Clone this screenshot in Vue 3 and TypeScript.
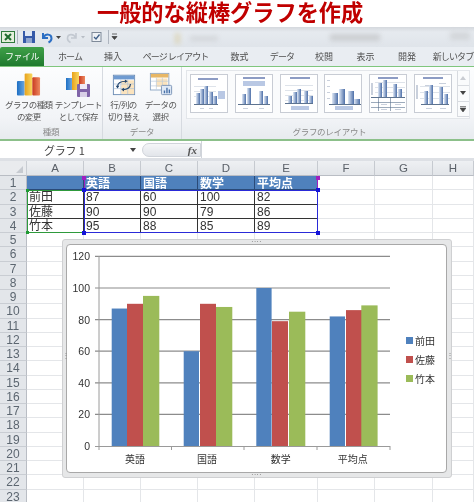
<script setup lang="ts">
type Box = [number, number, number, number, string]

const rowNumbers = Array.from({ length: 23 }, (_, i) => i + 1)
const columns = ['A', 'B', 'C', 'D', 'E', 'F', 'G', 'H']
const table = [
  ['', '英語', '国語', '数学', '平均点'],
  ['前田', '87', '60', '100', '82'],
  ['佐藤', '90', '90', '79', '86'],
  ['竹本', '95', '88', '85', '89'],
]
const sheetCells = rowNumbers.flatMap((r) =>
  columns.map((c, i) => ({
    key: `${c}${r}`,
    text: table[r - 1]?.[i] ?? '',
    head: r === 1 && i < 5,
    body: r > 1 && r <= 4 && i < 5,
    row: r,
  })),
)

const tabs = [
  { label: 'ホーム', w: 46, kana: true },
  { label: '挿入', w: 40, kana: false },
  { label: 'ページ レイアウト', w: 85, kana: true },
  { label: '数式', w: 43, kana: false },
  { label: 'データ', w: 42, kana: true },
  { label: '校閲', w: 42, kana: false },
  { label: '表示', w: 41, kana: false },
  { label: '開発', w: 42, kana: false },
  { label: '新しいタブ', w: 50, kana: true },
]

const C = { t: '#8d9cc4', b: '#b9c8e4', d: '#5c7cb0', l: '#c9d0dc', a: '#5d7390' }
const bar = (x: number, h: number, w = 4): Box => [x, 30 - h, w, h, 'url(#thumbBar)']
const thumbs: Box[][] = [
  [[8, 4, 20, 2, C.t], [4, 12, 22, .6, C.l], [4, 17, 22, .6, C.l], [4, 22, 22, .6, C.l], bar(6, 11), bar(10, 15), bar(14, 18), bar(19, 12), bar(23, 8), [4, 30, 24, 1, C.a], [28, 17, 7, 8, C.b], [10, 34, 4, 1, C.l], [19, 34, 4, 1, C.l]],
  [[8, 3, 22, 2, C.t], [8, 7, 22, 5, C.b], bar(7, 10), bar(12, 16), bar(24, 13), bar(29, 8), [3, 30, 32, 1, C.a], [8, 34, 5, 1, C.l], [24, 34, 5, 1, C.l]],
  [[10, 3, 20, 2, C.t], [5, 11, 28, .6, C.l], [5, 16, 28, .6, C.l], [5, 21, 28, .6, C.l], [5, 26, 28, .6, C.l], bar(8, 8), bar(13, 12), bar(17, 15), bar(24, 13), bar(29, 8), [5, 29, 28, 1, C.a], [11, 32, 18, 4, C.b]],
  [[3, 6, 3, 1, C.l], [3, 12, 3, 1, C.l], [3, 18, 3, 1, C.l], [3, 24, 3, 1, C.l], bar(8, 11, 6), bar(15, 15, 6), bar(24, 13, 6), bar(30, 5, 6), [5, 30, 32, 1, C.a], [11, 32, 18, 4, C.b]],
  [[9, 3, 20, 2, C.t], [2, 9, 2, 12, C.l], [6, 8, 30, .6, C.l], [6, 13, 30, .6, C.l], [6, 18, 30, .6, C.l], [9, 9, 4, 14, 'url(#thumbBar)'], [14, 6, 4, 17, 'url(#thumbBar)'], [24, 10, 4, 13, 'url(#thumbBar)'], [29, 15, 4, 8, 'url(#thumbBar)'], [2, 23, 34, 1, C.a], [2, 28, 34, .6, C.a], [2, 33, 34, .6, C.a], [9, 23, .6, 14, C.a], [21, 23, .6, 14, C.a], [12, 30, 6, 1, C.l], [26, 30, 6, 1, C.l], [12, 35, 6, 1, C.l], [26, 35, 6, 1, C.l]],
  [[9, 3, 20, 2, C.t], [2, 11, 2, 14, C.l], [6, 12, 30, .6, C.l], [6, 18, 30, .6, C.l], [6, 24, 30, .6, C.l], [25, 9, 7, 1, C.l], [11, 11, 6, 1, C.l], bar(10, 13), bar(15, 19), bar(25, 17), bar(30, 10), [7, 30, 28, 1, C.a], [12, 34, 6, 1, C.l], [26, 34, 6, 1, C.l]],
]

const seriesColors = ['#4f81bd', '#c0504d', '#9bbb59']
const legendNames = ['前田', '佐藤', '竹本']
const axisValues = [0, 20, 40, 60, 80, 100, 120]
const axisY = (v: number) => 201 - v * 1.58
const barX = [
  [44.7, 60, 76],
  [116.7, 133, 149],
  [189.3, 205, 222],
  [262.7, 279, 294.3],
]
const barW = [15.3, 16, 16.3]
const categories = [
  { name: '英語', cx: 68, values: [87, 90, 95] },
  { name: '国語', cx: 140, values: [60, 90, 88] },
  { name: '数学', cx: 213.7, values: [100, 79, 85] },
  { name: '平均点', cx: 285.7, values: [82, 86, 89] },
]
</script>

<template>
  <div class="page">
    <h1 class="title">一般的な縦棒グラフを作成</h1>

    <div class="titlebar">
      <svg class="qat" width="118" height="20" viewBox="0 0 118 20">
        <rect x="1.5" y="4.5" width="13" height="11" fill="#e4efdc" stroke="#2f7a3c" />
        <path d="M5 7l6 6M11 7l-6 6" stroke="#1e6b2d" stroke-width="2" />
        <path d="M17.5 3v14" stroke="#aeb5bf" />
        <rect x="23" y="4" width="12" height="12" fill="#3559a8" />
        <rect x="25" y="4" width="7" height="5" fill="#dfe7f4" />
        <rect x="26" y="11" width="6" height="5" fill="#8fa5cf" />
        <path d="M43 6v5h5M43.5 10.5c2-4 8-4 8 1 0 2-1 3-3 4" fill="none" stroke="#2c6fc4" stroke-width="2" />
        <path d="M56 9h5l-2.5 3z" fill="#444" />
        <path d="M76 6v5h-5M75.5 10.5c-2-4-8-4-8 1 0 2 1 3 3 4" fill="none" stroke="#c3c9d1" stroke-width="1.6" />
        <path d="M81 9h4l-2 2.5z" fill="#b8bdc5" />
        <rect x="92" y="5.5" width="9" height="9" fill="#eef1f5" stroke="#7f8a99" />
        <path d="M94 10l2 2 3.5-4.5" fill="none" stroke="#3f5f88" stroke-width="1.3" />
        <path d="M108.5 3v14" stroke="#aeb5bf" />
        <path d="M112 7h5M112 9.5h5l-2.5 3z" stroke="#444" fill="#444" stroke-width=".8" />
      </svg>
      <span class="smudge smudge-a"></span>
      <span class="smudge smudge-b"></span>
      <span class="smudge smudge-c"></span>
      <span class="smudge smudge-d"></span>
    </div>

    <nav class="tabs">
      <span class="tab-file">ファイル</span>
      <span
        v-for="t in tabs"
        :key="t.label"
        class="tab"
        :class="{ kana: t.kana }"
        :style="{ width: t.w + 'px' }"
      >{{ t.label }}</span>
    </nav>

    <section class="ribbon">
      <div class="group group-type">
        <div class="tools">
          <div class="tool tool-wide">
            <svg width="25" height="26" viewBox="0 0 26 26">
              <defs>
                <linearGradient id="cb" x1="0" x2="1" y1="0" y2="0"><stop offset="0" stop-color="#1d6fc4" /><stop offset="1" stop-color="#6aa6e0" /></linearGradient>
                <linearGradient id="cy" x1="0" x2="1" y1="0" y2="0"><stop offset="0" stop-color="#e8a21c" /><stop offset="1" stop-color="#f8d860" /></linearGradient>
                <linearGradient id="cr" x1="0" x2="1" y1="0" y2="0"><stop offset="0" stop-color="#c93a20" /><stop offset="1" stop-color="#ee8a60" /></linearGradient>
              </defs>
              <rect x="1" y="10" width="8" height="15" rx="1" fill="url(#cb)" />
              <rect x="9" y="2" width="8" height="23" rx="1" fill="url(#cy)" />
              <rect x="17" y="6" width="8" height="19" rx="1" fill="url(#cr)" />
            </svg>
            <span>グラフの種類<br />の変更</span>
          </div>
          <div class="tool tool-wide">
            <svg width="26" height="26" viewBox="0 0 26 26">
              <rect x="1" y="7" width="6" height="12" fill="url(#cb)" />
              <rect x="7" y="1" width="7" height="18" fill="url(#cy)" />
              <rect x="14" y="5" width="6" height="11" fill="url(#cr)" />
              <rect x="12" y="13" width="13" height="13" rx="1" fill="#8064a8" />
              <rect x="15" y="13" width="7" height="5" fill="#efeaf5" />
              <rect x="15" y="21" width="7" height="5" fill="#d8cfe6" />
            </svg>
            <span>テンプレート<br />として保存</span>
          </div>
        </div>
        <div class="group-label">種類</div>
      </div>

      <div class="group group-data">
        <div class="tools">
          <div class="tool tool-narrow">
            <svg width="24" height="26" viewBox="0 0 26 26">
              <rect x="1.5" y="3.5" width="23" height="21" fill="#fff" stroke="#6d8db5" />
              <rect x="2" y="4" width="22" height="4" fill="#6f9bd1" />
              <rect x="10" y="9" width="14" height="15" fill="#fbe3bd" />
              <path d="M2 13h22M2 18h22M9.5 8v16M17 8v16" stroke="#a9bfd8" stroke-width=".7" />
              <path d="M6 16c0-4 4-6 9-6" fill="none" stroke="#23466f" stroke-width="1.3" />
              <path d="M14 8l3 2-3 2zM4 15l2 3 2-3z" fill="#23466f" />
              <path d="M20 13c0 4-4 6-8 6" fill="none" stroke="#23466f" stroke-width="1.3" />
              <path d="M13 17l-3 2 3 2z" fill="#23466f" />
            </svg>
            <span>行/列の<br />切り替え</span>
          </div>
          <div class="tool tool-narrow">
            <svg width="24" height="26" viewBox="0 0 26 26">
              <rect x="1.5" y="1.5" width="20" height="18" fill="#fff" stroke="#8da6c4" />
              <rect x="2" y="2" width="19" height="4" fill="#e8b765" />
              <rect x="8" y="7" width="12" height="9" fill="#fbe3bd" />
              <path d="M2 10h19M2 15h19M8 6v13M14.5 6v13" stroke="#b9c8da" stroke-width=".7" />
              <rect x="13.5" y="14.5" width="11" height="10" rx="1" fill="#dfe9f6" stroke="#7993b5" />
              <path d="M16 23v-3h1.5v3zM18.7 23v-6h1.5v6zM21.3 23v-4h1.5v4z" fill="#4670a8" />
            </svg>
            <span>データの<br />選択</span>
          </div>
        </div>
        <div class="group-label">データ</div>
      </div>

      <div class="group group-layout">
        <div class="gallery">
          <svg
            v-for="(thumb, i) in thumbs"
            :key="i"
            class="thumb"
            width="38"
            height="39"
            viewBox="0 0 38 39"
          >
            <defs v-if="i === 0">
              <linearGradient id="thumbBar" x1="0" x2="1" y1="0" y2="0">
                <stop offset="0" stop-color="#dfe8f5" />
                <stop offset="1" stop-color="#4d6fa8" />
              </linearGradient>
            </defs>
            <rect
              v-for="(b, j) in thumb"
              :key="j"
              :x="b[0]"
              :y="b[1]"
              :width="b[2]"
              :height="b[3]"
              :fill="b[4]"
            />
          </svg>
          <div class="scroller">
            <span class="scroll-btn"><svg width="6" height="4" viewBox="0 0 6 4"><path d="M3 0l3 4H0z" fill="#c9ccd2" /></svg></span>
            <span class="scroll-btn"><svg width="6" height="4" viewBox="0 0 6 4"><path d="M0 0h6L3 4z" fill="#444" /></svg></span>
            <span class="scroll-btn"><svg width="6" height="6" viewBox="0 0 6 6"><path d="M0 .5h6M0 2h6L3 6z" stroke="#444" stroke-width=".6" fill="#444" /></svg></span>
          </div>
        </div>
        <div class="group-label">グラフのレイアウト</div>
      </div>
    </section>

    <div class="formula">
      <span class="namebox">グラフ 1</span>
      <svg class="name-arrow" width="6" height="4" viewBox="0 0 6 4"><path d="M0 0h6L3 4z" fill="#444" /></svg>
      <span class="fx-pill"><i class="fx">fx</i></span>
      <span class="formula-input"></span>
    </div>

    <div class="sheet">
      <div class="grid">
        <div class="corner"><svg width="7" height="7" viewBox="0 0 7 7"><path d="M7 0v7H0z" fill="#c6cad0" /></svg></div>
        <div v-for="c in columns" :key="c" class="col-head">{{ c }}</div>
        <template v-for="r in rowNumbers" :key="r">
          <div class="row-head">{{ r }}</div>
          <div
            v-for="cell in sheetCells.filter((s) => s.row === r)"
            :key="cell.key"
            class="cell"
            :class="{ 'cell-head': cell.head, 'cell-body': cell.body }"
          >{{ cell.text }}</div>
        </template>
      </div>

      <div class="sel sel-green"></div>
      <div class="sel sel-purple"></div>
      <div class="sel sel-blue"></div>
      <i class="handle h-b1"></i><i class="handle h-e1"></i>
      <i class="handle h-b2"></i><i class="handle h-e2"></i>
      <i class="handle h-b4"></i><i class="handle h-e4"></i>
      <i class="handle g h-a2"></i><i class="handle g h-a4"></i>

      <div class="chart">
        <div class="chart-inner">
          <svg class="chart-svg" width="379" height="228" viewBox="0 0 379 228">
            <g v-for="v in axisValues" :key="v">
              <line x1="28" :x2="v === 0 ? 28 : 323" :y1="axisY(v)" :y2="axisY(v)" stroke="#8c8c8c" stroke-width="1.2" />
              <text x="23" :y="axisY(v) + 4" text-anchor="end" class="tick">{{ v }}</text>
            </g>
            <g v-for="(cat, i) in categories" :key="cat.name">
              <rect
                v-for="(val, s) in cat.values"
                :key="s"
                :x="barX[i][s]"
                :y="axisY(val)"
                :width="barW[s]"
                :height="val * 1.58"
                :fill="seriesColors[s]"
              />
              <text :x="cat.cx" y="218" text-anchor="middle" class="cat">{{ cat.name }}</text>
            </g>
            <path d="M32 11v194M28 201.5h295M104.5 201v4M177 201v4M250 201v4M323 201v4" stroke="#9a9a9a" fill="none" />
            <g v-for="(n, i) in legendNames" :key="n">
              <rect x="339" :y="92 + i * 19" width="7" height="7" :fill="seriesColors[i]" />
              <text x="348" :y="99.5 + i * 19" class="legend">{{ n }}</text>
            </g>
          </svg>
        </div>
        <span class="dots dots-top">····</span>
        <span class="dots dots-bottom">····</span>
        <span class="vdots vdots-left">⋮</span>
        <span class="vdots vdots-right">⋮</span>
      </div>
    </div>
  </div>
</template>

<style>
html, body { margin: 0; background: #fff; }
</style>

<style scoped>
.page {
  width: 474px;
  height: 502px;
  overflow: hidden;
  background: #fff;
  color: #4a4a4a;
  font-family: "Noto Sans CJK JP", "Liberation Sans", sans-serif;
  filter: blur(.3px);
}
.title {
  margin: 0;
  height: 27px;
  padding-left: 97px;
  font-size: 22.2px;
  line-height: 23px;
  font-weight: 700;
  color: #c00000;
  white-space: nowrap;
}
.titlebar {
  position: relative;
  height: 20px;
  background: linear-gradient(#d4d8dd, #e6eaef 25%, #dfe4ea);
}
.qat { display: block; }
.smudge {
  position: absolute;
  background: #c2c4c6;
  filter: blur(2.5px);
  opacity: .7;
}
.smudge-a { left: 175px; top: 6px; width: 5px; height: 11px; background: #d9cfa8; }
.smudge-b { left: 190px; top: 9px; width: 28px; height: 5px; opacity: .5; }
.smudge-c { left: 330px; top: 7px; width: 50px; height: 7px; }
.smudge-d { left: 450px; top: 5px; width: 20px; height: 8px; opacity: .5; }
.tabs {
  display: flex;
  align-items: center;
  height: 19px;
  background: #e9edf2;
  border-bottom: 1px solid #7fc67d;
  font-size: 9px;
  white-space: nowrap;
  overflow: hidden;
}
.tab-file {
  flex: none;
  width: 44px;
  height: 19px;
  margin-right: 3px;
  line-height: 19px;
  text-align: center;
  color: #fff;
  letter-spacing: -.5px;
  background: linear-gradient(#3fa048, #1f7a2e);
  border-radius: 2px 2px 0 0;
}
.tab { flex: none; text-align: center; color: #4f4f4f; }
.tab.kana { letter-spacing: -.9px; }
.ribbon {
  display: flex;
  height: 72px;
  background: linear-gradient(#fcfdfe, #f2f4f7 70%, #e7ebef);
  border-bottom: 2px solid #8cc08a;
}
.group {
  display: flex;
  flex-direction: column;
  flex: none;
  border-right: 1px solid #d6dae0;
}
.group-type { width: 102px; }
.group-data { width: 78px; }
.group-layout { flex: 1; border-right: 0; }
.tools { display: flex; flex: 1; justify-content: center; padding-top: 4px; min-height: 0; }
.group-type .tools { gap: 2px; padding-left: 5px; }
.tool {
  display: flex;
  flex-direction: column;
  align-items: center;
  font-size: 8.5px;
  line-height: 12px;
  letter-spacing: -.6px;
  text-align: center;
  color: #555;
  white-space: nowrap;
}
.tool svg { margin-bottom: 1px; }
.tool-wide { width: 48px; }
.tool-narrow { width: 37px; }
.group-label {
  height: 15px;
  line-height: 14px;
  font-size: 8.5px;
  text-align: center;
  color: #8a8a8a;
  letter-spacing: -.3px;
}
.gallery {
  display: flex;
  align-items: flex-start;
  gap: 6.8px;
  height: 44px;
  margin: 3px 7px 0 4px;
  padding: 3px 0 0 3px;
  background: #fafbfc;
  border: 1px solid #e3e6ea;
  box-sizing: content-box;
}
.group-layout .group-label { margin-top: auto; }
.thumb {
  flex: none;
  background: #fff;
  outline: 1px solid #c8ccd4;
  outline-offset: -1px;
}
.scroller {
  display: flex;
  flex-direction: column;
  width: 11px;
  margin: -3px 0 0 -2px;
  border-left: 1px solid #d8dbe0;
}
.scroll-btn {
  display: flex;
  align-items: center;
  justify-content: center;
  height: 15.3px;
  border-bottom: 1px solid #d8dbe0;
  box-sizing: border-box;
}
.formula {
  display: flex;
  align-items: center;
  height: 17px;
  background: #fff;
  border-bottom: 3px solid #dde0e5;
  font-size: 11px;
  color: #444;
}
.namebox { padding-left: 44px; letter-spacing: -.2px; white-space: nowrap; flex: none; width: 86px; }
.name-arrow { margin-right: 6px; flex: none; }
.fx-pill {
  flex: none;
  width: 59px;
  height: 14px;
  text-align: right;
  background: linear-gradient(#f5f6f8, #e2e5ea);
  border: 1px solid #d0d4da;
  border-radius: 8px 0 0 8px;
  box-sizing: border-box;
}
.fx {
  padding-right: 3px;
  font-family: "Liberation Serif", serif;
  font-weight: 700;
  font-size: 11px;
  line-height: 12px;
  color: #555;
  display: block;
}
.formula-input { flex: 1; height: 17px; border-left: 1px solid #d0d4da; }
.sheet {
  position: relative;
  height: 342px;
  overflow: hidden;
}
.grid {
  display: grid;
  grid-template-columns: 27px 57px 57px 57px 57px 63px 57px 58px 41px;
  grid-template-rows: 15px repeat(23, 14.25px);
  font-family: "Liberation Sans", "Noto Sans CJK JP", sans-serif;
}
.corner {
  display: flex;
  align-items: flex-end;
  justify-content: flex-end;
  padding: 0 3px 2px 0;
  background: #e9ebee;
  border-right: 1px solid #c9cdd3;
  border-bottom: 1px solid #b9bdc4;
  box-sizing: border-box;
}
.col-head {
  text-align: center;
  font-size: 11.5px;
  line-height: 15px;
  color: #5a6068;
  background: linear-gradient(#eef0f3, #e2e5e9);
  border-right: 1px solid #c6cad0;
  border-bottom: 1px solid #b9bdc4;
  box-sizing: border-box;
}
.row-head {
  text-align: center;
  font-size: 12px;
  line-height: 14px;
  color: #5c6670;
  background: #e3e6ea;
  border-right: 1px solid #b9bdc4;
  border-bottom: 1px solid #c9cdd3;
  box-sizing: border-box;
}
.cell {
  padding-left: 1px;
  font-size: 12px;
  line-height: 14px;
  color: #333;
  border-right: 1px solid #e4e6e9;
  border-bottom: 1px solid #e4e6e9;
  box-sizing: border-box;
  white-space: nowrap;
}
.cell-head {
  padding-left: 2px;
  font-weight: 700;
  color: #fff;
  background: #4f81bd;
  border-right: 1px solid #2a4a78;
  border-bottom: 1px solid #2a4a78;
  font-family: "Noto Sans CJK JP", sans-serif;
}
.cell-body {
  padding-left: 2px;
  border-right: 1px solid #333;
  border-bottom: 1px solid #333;
}
.sel { position: absolute; pointer-events: none; }
.sel-green { left: 27px; top: 29px; width: 57px; height: 43px; border: 1px solid #2e9a3c; border-right: 0; box-sizing: border-box; }
.sel-purple { left: 84px; top: 15px; width: 234px; height: 14px; border: 1px solid #a020c0; border-width: 0 1px; box-sizing: border-box; }
.sel-blue { left: 84px; top: 29px; width: 234px; height: 43px; border: 1px solid #2a2ad8; box-sizing: border-box; }
.handle { position: absolute; width: 4px; height: 4px; background: #1414d8; }
.handle.g { background: #1e9a32; width: 3px; height: 3px; }
.h-b1 { left: 82px; top: 15px; background: #a020c0; }
.h-e1 { left: 316px; top: 15px; background: #a020c0; }
.h-b2 { left: 82px; top: 27px; }
.h-e2 { left: 316px; top: 27px; }
.h-b4 { left: 82px; top: 70px; }
.h-e4 { left: 316px; top: 70px; }
.h-a2 { left: 26px; top: 28px; }
.h-a4 { left: 26px; top: 70px; }
.chart {
  position: absolute;
  left: 62px;
  top: 78px;
  width: 390px;
  height: 239px;
  box-sizing: border-box;
  padding: 4px 4px 4px 3px;
  background: #e6e7e8;
  border: 1px solid #cfd0d2;
  border-radius: 3px;
}
.chart-inner {
  width: 100%;
  height: 100%;
  background: #fff;
  border: 1px solid #a8a8a8;
  border-radius: 4px;
  box-sizing: border-box;
  overflow: hidden;
}
.chart-svg { display: block; }
.tick, .cat, .legend { fill: #333; font-family: "Noto Sans CJK JP", "Liberation Sans", sans-serif; }
.tick { font-family: "Liberation Sans", sans-serif; font-size: 10.5px; }
.cat { font-size: 10px; }
.legend { font-size: 10px; }
.dots, .vdots { position: absolute; color: #8a8a8a; font-size: 8px; line-height: 5px; font-family: "Liberation Sans", sans-serif; }
.dots-top { left: 188px; top: -1px; }
.dots-bottom { left: 188px; top: 232px; }
.vdots-left { left: -1px; top: 113px; }
.vdots-right { left: 383px; top: 113px; }
</style>
